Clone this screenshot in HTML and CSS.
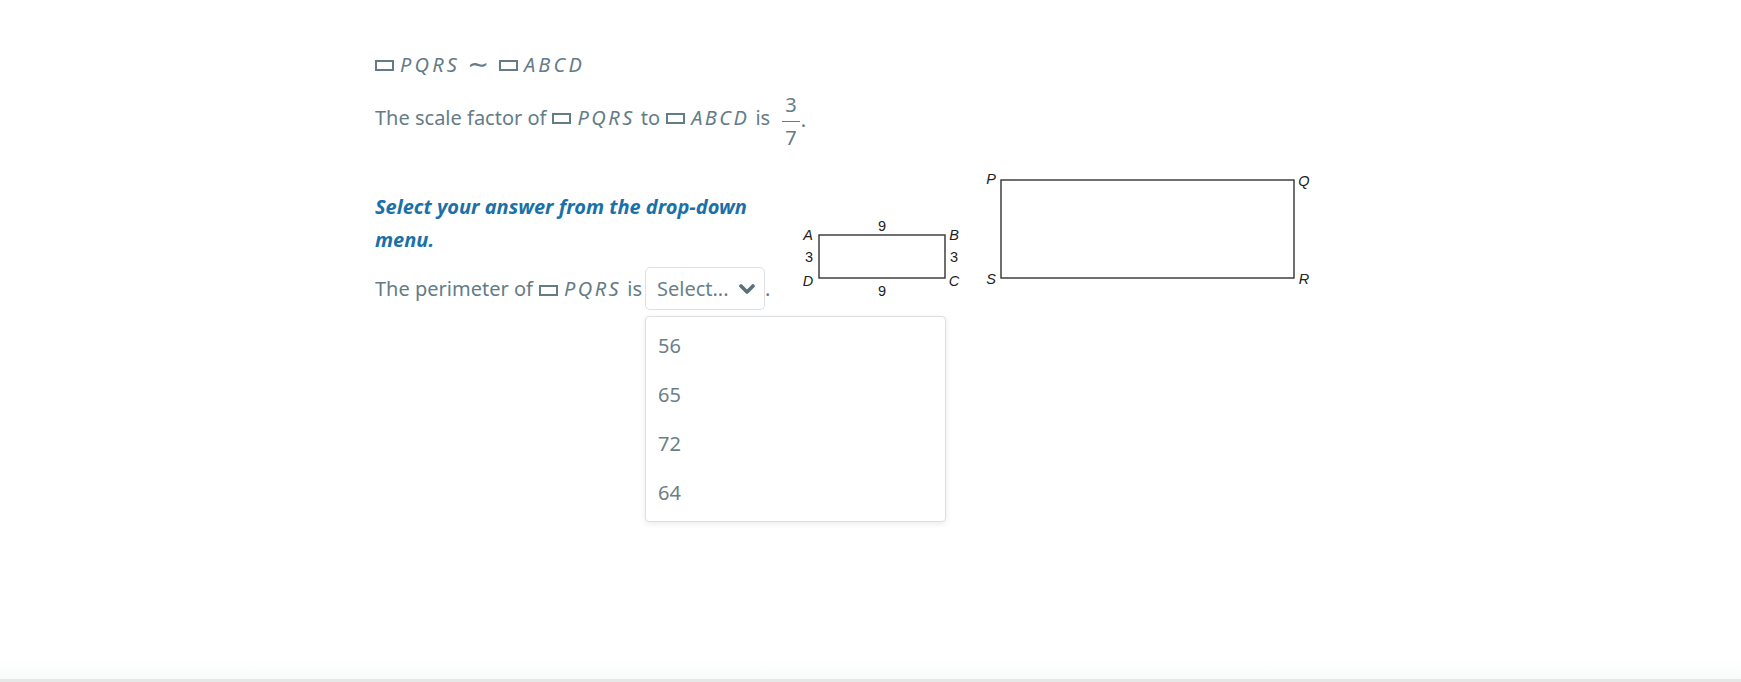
FILE: index.html
```html
<!DOCTYPE html>
<html>
<head>
<meta charset="utf-8">
<link rel="stylesheet" href="styles.css">
</head>
<body>
<div class="page">
  <main class="content">
    <div class="line line-sim">
      <span class="rect-sym"></span><span class="mvar">PQRS</span>
      <span class="tilde">∼</span>
      <span class="rect-sym"></span><span class="mvar">ABCD</span>
    </div>
    <div class="line line-scale">
      <span>The scale factor of</span>
      <span class="rect-sym"></span><span class="mvar">PQRS</span>
      <span>to</span>
      <span class="rect-sym"></span><span class="mvar">ABCD</span>
      <span>is</span>
      <span class="frac"><span class="num">3</span><span class="den">7</span></span><span class="fdot">.</span>
    </div>
    <div class="row">
      <div class="left">
        <p class="instr">Select your answer from the drop-down menu.</p>
        <div class="line line-q">
          <span>The perimeter of</span>
          <span class="rect-sym"></span><span class="mvar">PQRS</span>
          <span>is</span>
          <span class="select-wrap">
            <span class="select">Select...
              <svg class="chev" width="16" height="12" viewBox="0 0 16 12"><path d="M2 3 L8 9 L14 3" fill="none" stroke="#5a707a" stroke-width="3.6" stroke-linecap="round" stroke-linejoin="round"/></svg>
            </span>
            <ul class="menu">
              <li>56</li>
              <li>65</li>
              <li>72</li>
              <li>64</li>
            </ul>
          </span><span class="qdot">.</span>
        </div>
      </div>
      <svg class="diagram" width="520" height="140" viewBox="0 0 520 140">
        <g fill="none" stroke="#333" stroke-width="1.4">
          <rect x="23" y="70" width="126" height="43"/>
          <rect x="205" y="15" width="293" height="98"/>
        </g>
        <g font-family="Liberation Sans, Arial, sans-serif" font-size="14.5" fill="#222" text-anchor="middle">
          <g font-style="italic">
            <text x="12" y="75">A</text>
            <text x="158" y="75">B</text>
            <text x="158" y="121">C</text>
            <text x="12" y="121">D</text>
            <text x="195" y="19">P</text>
            <text x="508" y="21">Q</text>
            <text x="508" y="119">R</text>
            <text x="195" y="119">S</text>
          </g>
          <text x="86" y="66">9</text>
          <text x="86" y="131">9</text>
          <text x="13" y="97">3</text>
          <text x="158" y="97">3</text>
        </g>
      </svg>
    </div>
  </main>
  <footer class="foot"></footer>
</div>
</body>
</html>
```
FILE: styles.css
```css
html, body {
  margin: 0;
  padding: 0;
  background: #fff;
}
.page {
  min-height: 100vh;
  display: flex;
  flex-direction: column;
  font-family: "Noto Sans", "Open Sans", sans-serif;
  font-size: 20px;
  color: #647c86;
}
.content {
  flex: 1;
  padding: 47px 0 0 375px;
}
.line {
  display: flex;
  align-items: center;
  gap: 6px;
  white-space: nowrap;
}
.line-sim {
  height: 34px;
}
.line-scale {
  margin-top: 6px;
  height: 60px;
}
.rect-sym {
  display: inline-block;
  width: 15px;
  height: 7px;
  border: 2px solid #647c86;
  margin-right: 0;
  margin-top: 3px;
}
.mvar {
  font-style: italic;
  letter-spacing: 2.5px;
}
.line-sim .mvar {
  letter-spacing: 3.2px;
}
.tilde {
  margin: 0 4px 0 1px;
  font-family: "DejaVu Sans", sans-serif;
  font-size: 26px;
  line-height: 1;
}
.frac {
  display: inline-flex;
  flex-direction: column;
  align-items: center;
  line-height: 22px;
  margin-left: 6px;
  margin-top: 8px;
}
.frac .num {
  padding: 0 3px 5px;
  border-bottom: 1px solid #647c86;
}
.frac .den {
  padding-top: 5px;
}
.fdot {
  margin-left: -5px;
  margin-top: 4px;
}
.row {
  display: flex;
  margin-top: 18px;
}
.left {
  width: 420px;
  padding-top: 25px;
}
.instr {
  margin: 0;
  max-width: 385px;
  font-weight: 700;
  font-style: italic;
  color: #1a70a8;
  line-height: 33px;
}
.line-q {
  margin-top: 11px;
  height: 43px;
}
.select-wrap {
  position: relative;
  margin-left: -3px;
}
.select {
  display: flex;
  align-items: center;
  justify-content: space-between;
  box-sizing: border-box;
  width: 120px;
  height: 43px;
  padding: 0 9px 0 11px;
  border: 1px solid #dde1e3;
  border-radius: 5px;
  color: #6b7f88;
}
.qdot {
  margin-left: -6px;
}
.menu {
  position: absolute;
  left: 0;
  top: 49px;
  width: 301px;
  box-sizing: border-box;
  margin: 0;
  padding: 4px 0;
  list-style: none;
  background: #fff;
  border: 1px solid #dcdfe1;
  border-radius: 4px;
  box-shadow: 0 2px 6px rgba(0, 0, 0, 0.08);
  z-index: 2;
}
.menu li {
  height: 49px;
  line-height: 49px;
  padding-left: 12px;
  color: #6b7f88;
}
.diagram {
  display: block;
  flex: none;
  margin-left: 1px;
}
.foot {
  height: 19px;
  background: linear-gradient(#ffffff, #f8fbfa);
  border-bottom: 3px solid #e6e7e7;
}
```
